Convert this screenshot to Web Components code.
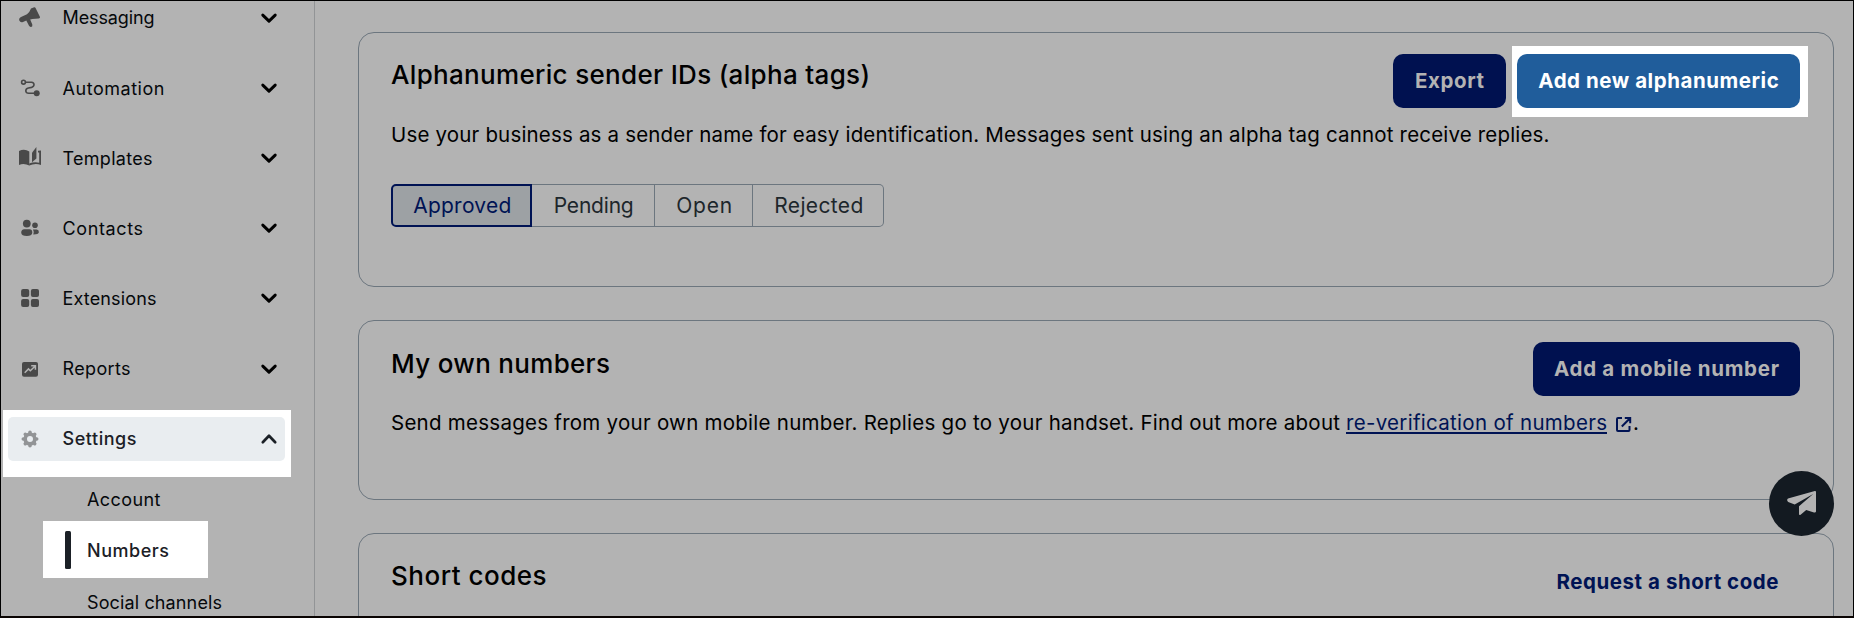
<!DOCTYPE html>
<html lang="en">
<head>
<meta charset="utf-8">
<title>Numbers</title>
<style>
html,body{margin:0;height:100%;overflow:hidden;background:#b3b3b3}
body{font-family:Inter,"Liberation Sans",sans-serif;color:#000}
</style>
</head>
<body>
<app-shell>
  <side-nav slot="nav">
    <nav-item icon="megaphone" w="92">Messaging</nav-item>
    <nav-item icon="route" w="102">Automation</nav-item>
    <nav-item icon="book" w="90">Templates</nav-item>
    <nav-item icon="people" w="80.5">Contacts</nav-item>
    <nav-item icon="grid" w="94">Extensions</nav-item>
    <nav-item icon="chart" w="68">Reports</nav-item>
    <nav-item icon="gear" w="74" active>Settings</nav-item>
    <sub-item w="73.5" style="height:44px;padding-top:2px">Account</sub-item>
    <sub-item w="82" active>Numbers</sub-item>
    <sub-item w="135" style="height:49px">Social channels</sub-item>
  </side-nav>
  <info-card style="height:255px">
    <fit-text slot="title" w="479">Alphanumeric sender IDs (alpha tags)</fit-text>
    <push-button slot="actions" w="69" width="113">Export</push-button>
    <push-button slot="actions" w="240.5" width="283" kind="lit">Add new alphanumeric</push-button>
    <fit-text w="1158.5">Use your business as a sender name for easy identification. Messages sent using an alpha tag cannot receive replies.</fit-text>
    <tab-bar slot="extra">
      <tab-item w="98" style="width:141px" selected>Approved</tab-item>
      <tab-item w="80" style="width:123px">Pending</tab-item>
      <tab-item w="56" style="width:98px">Open</tab-item>
      <tab-item w="89" style="width:131px">Rejected</tab-item>
    </tab-bar>
  </info-card>
  <info-card style="height:180px;--title-line:43px">
    <fit-text slot="title" w="219">My own numbers</fit-text>
    <push-button slot="actions" w="225" width="267">Add a mobile number</push-button>
    <fit-text w="949">Send messages from your own mobile number. Replies go to your handset. Find out more about</fit-text><out-link w="261">re-verification of numbers</out-link><span>.</span>
  </info-card>
  <info-card style="height:180px">
    <fit-text slot="title" w="155.5">Short codes</fit-text>
    <push-button slot="actions" w="222" width="267" kind="plain">Request a short code</push-button>
  </info-card>
  <chat-launcher slot="float"></chat-launcher>
</app-shell>
<script>
const define = (name, html, init) => {
  const tpl = document.createElement('template');
  tpl.innerHTML = html;
  customElements.define(name, class extends HTMLElement {
    connectedCallback() {
      if (this.shadowRoot) return;
      const root = this.attachShadow({ mode: 'open' });
      root.appendChild(tpl.content.cloneNode(true));
      if (init) init(this, root);
    }
  });
};

const icons = {
  megaphone: '<path d="M13 2.6 16.2 1.3Q17.2 1.1 17.7 2.2L22 11Q22.3 12.4 20.8 12.5L14.4 12.9 12.2 13.6 14.3 18.4Q14.8 20.4 13.2 20.9 11.8 21.2 11 19.8L8.3 14.6 5 16.1Q2.3 17 1.3 14.6 .6 12 3 10.9L9 8.2Q11.5 6.7 13 2.6Z"/>',
  route: '<g fill="none" stroke="#494949" stroke-width="1.6"><circle cx="5.5" cy="6.2" r="1.9"/><path d="M7.5 6.2H13.5Q16 6.4 16 8.6 16 10.8 13.6 11.4L10.4 12Q7.7 12.6 7.8 15 8 17.3 10.8 17.3H17"/></g><circle cx="18.7" cy="17.2" r="3"/>',
  book: '<path d="M1 5Q6.3 2.4 11.3 5.4V19.6Q6.2 16.8 1 18.9Z"/><path d="M14 6.8 18.4 1V12.4L14 16.2Z"/><path d="M20 4.8 23 4.4V18.9Q16.8 16.9 11.2 19.6V17.6Q16.4 15.6 21.2 16.8V6.4L20 6.6Z"/>',
  people: '<circle cx="8.8" cy="7.6" r="3.9"/><circle cx="17" cy="9.2" r="2.8"/><path d="M3.2 16.7Q3.2 13.2 6.3 13.2H11.4Q14.3 13.2 14.3 16.4V16.7Q13.9 20 8.8 20 3.6 20 3.2 16.7ZM15 13.6H18.7Q21 13.8 20.9 16.2 20.3 18.5 15.3 18.4 16.3 16 15 13.6Z"/>',
  grid: '<rect x="3.1" y="3" width="8.1" height="8.1" rx="2"/><rect x="12.9" y="3" width="8.1" height="8.1" rx="2"/><rect x="3.1" y="12.9" width="8.1" height="8.1" rx="2"/><rect x="12.9" y="12.9" width="8.1" height="8.1" rx="2"/>',
  chart: '<rect x="4" y="5" width="16" height="14.7" rx="2"/><path d="M6.7 15.8 10.5 11.9 12.3 13.7 17 9.2M13.2 8.7H17.4V12.8" fill="none" stroke="#b3b3b3" stroke-width="1.5"/>',
  gear: '<circle cx="12" cy="12" r="4.8" fill="none" stroke="#929496" stroke-width="3.6"/><path d="M12 5.3V6M12 18V18.7M5.3 12H6M18 12H18.7M7.3 7.3 7.7 7.7M16.3 16.3 16.7 16.7M7.3 16.7 7.7 16.3M16.3 7.7 16.7 7.3" fill="none" stroke="#929496" stroke-width="3.6" stroke-linecap="round"/>'
};

const label = (el, root) => {
  const t = document.createElement('fit-text');
  t.setAttribute('w', el.getAttribute('w'));
  t.textContent = el.textContent;
  el.textContent = '';
  root.querySelector('[data-label]').replaceWith(t);
};

define('app-shell', `<style>
:host{display:flex;box-sizing:border-box;width:1854px;height:618px;overflow:hidden;background:#b3b3b3;border:1px solid #000;border-bottom:2px solid #0a0402;position:relative}
aside{box-sizing:border-box;width:314px;flex:none;border-right:1px solid #929496;overflow:hidden}
main{flex:1;display:flex;flex-direction:column;gap:33px;padding:31px 19px 0 43px;overflow:hidden}
</style><aside><slot name="nav"></slot></aside><main><slot></slot></main><slot name="float"></slot>`);

define('side-nav', `<style>
:host{display:flex;flex-direction:column;margin-top:-18.2px;font-size:18px;color:#05080b}
</style><slot></slot>`);

define('nav-item', `<style>
:host{display:block;height:70.15px;flex:none}
.row{height:100%;display:flex;align-items:center;padding:0 36px 0 17px;box-sizing:border-box}
svg{flex:none;display:block}
.ic{fill:#494949;margin-right:20.5px}
.chev{margin-left:auto;fill:none;stroke:#000;stroke-width:3;stroke-linecap:round;stroke-linejoin:round}
:host([active]){height:67px;box-sizing:border-box;background:#fff;padding:7px 6px 16px 5px;margin:6.1px 23px 0 2px;font-weight:500;color:#1b2026}
:host([active]) .row{background:#e9edf0;border-radius:5px;padding:0 7px 0 10px}
:host([active]) .chev{stroke:#1b2026;stroke-width:2.7}
</style><div class="row"><svg class="ic" width="24" height="24" viewBox="0 0 24 24"></svg><i data-label></i><svg class="chev" width="18" height="18" viewBox="0 0 18 18"><path d="M2.8 6.1 9 12.1 15.2 6.1"/></svg></div>`, (el, root) => {
  root.querySelector('.ic').innerHTML = icons[el.getAttribute('icon')];
  if (el.hasAttribute('active')) root.querySelector('.chev path').setAttribute('d', 'M2.8 12.2 9 5.8 15.2 12.2');
  label(el, root);
});

define('sub-item', `<style>
:host{display:flex;align-items:center;box-sizing:border-box;padding-left:86px;flex:none}
:host([active]){height:57px;width:165px;margin-left:42px;padding:2px 0 0 22px;background:#fff;font-weight:500;color:#1b2026}
b{display:none;width:6px;height:38px;border-radius:1.5px;background:#1b2026;margin-right:16px}
:host([active]) b{display:block}
</style><b></b><i data-label></i>`, label);

define('info-card', `<style>
:host{display:block;box-sizing:border-box;border:1px solid #6c767f;border-radius:16px;padding:21px 33px 0 32px;flex:none}
header{display:flex;justify-content:space-between;height:54px}
h2{margin:0;font-size:26px;line-height:var(--title-line,41px);font-weight:500}
.actions{display:flex;gap:11px}
.body{display:flex;font-size:20.5px;line-height:28px;margin-top:12.5px;height:28px;white-space:nowrap}
.extra{margin-top:35.5px}
</style><header><h2><slot name="title"></slot></h2><div class="actions"><slot name="actions"></slot></div></header>
<div class="body"><slot></slot></div><div class="extra"><slot name="extra"></slot></div>`);

define('push-button', `<style>
:host{display:block;height:54px}
button{font:700 20.5px/54px Inter,"Liberation Sans",sans-serif;border:0;padding:0;display:flex;justify-content:center;height:54px;border-radius:10px;background:#001150;color:#b3b3b3}
:host([kind=lit]){height:54px;padding:8px 8px 9px 5px;margin:-8px -8px -9px -5px;background:#fff}
:host([kind=lit]) button{background:#205d9b;color:#fff}
:host([kind=plain]) button{background:none;color:#001354;padding-left:2px}
</style><button type="button"><i data-label></i></button>`, (el, root) => {
  root.querySelector('button').style.width = el.getAttribute('width') + 'px';
  label(el, root);
});

define('tab-bar', `<style>:host{display:flex;height:43px;font-size:21px;color:#1d262b}</style><slot></slot>`);

define('tab-item', `<style>
:host{display:flex;align-items:center;justify-content:center;box-sizing:border-box;height:43px;padding:0 0 1px 1.5px;border:1px solid #6c767f;border-left:0}
:host(:last-child){border-radius:0 5px 5px 0}
:host([selected]){border:2px solid #001354;border-radius:5px 0 0 5px;background:#9da1a4;color:#001354}
</style><i data-label></i>`, label);

define('out-link', `<style>
:host{display:flex;color:#001354;margin-left:6px;margin-right:1px}
a{display:block;box-sizing:border-box;height:25.5px;border-bottom:2px solid #001354}
svg{margin:7px 0 0 8px;fill:none;stroke:#001354;stroke-width:2}
</style><a><i data-label></i></a><svg width="17" height="17" viewBox="0 0 17 17"><path d="M7 2H3Q2 2 2 3V14Q2 15 3 15H13.5Q14.5 15 14.5 14V10M9.8 2H15.2V7.3M15 2.2 6.8 10.5"/></svg>`, label);

define('chat-launcher', `<style>
:host{position:absolute;right:19px;bottom:80px;width:65px;height:65px;border-radius:50%;background:#131a21}
svg{display:block}
</style><svg width="65" height="65" viewBox="0 0 65 65" fill="#b3b3b3"><path d="M45.8 20Q47.2 19.8 47 21.4V40.6Q46.6 42 45 41.4L37.2 39 31.6 43.8Q30 44.6 30 42.9V35.3L44.2 23 25.7 33.6 19.2 31Q17.2 28.9 19 27.5Z"/></svg>`);

/* A single line of text, tracked so that it fills the width given in "w".
   Defined last, so that its font is already inherited when it is measured. */
define('fit-text', `<style>
:host{display:inline-block;white-space:nowrap;flex:none}
</style><span><slot></slot></span>`, (el, root) => {
  const w = parseFloat(el.getAttribute('w'));
  const n = el.textContent.length;
  const natural = root.querySelector('span').getBoundingClientRect().width;
  el.style.width = w + 'px';
  el.style.letterSpacing = ((w - natural) / (n - 1)).toFixed(4) + 'px';
});
</script>
</body>
</html>
